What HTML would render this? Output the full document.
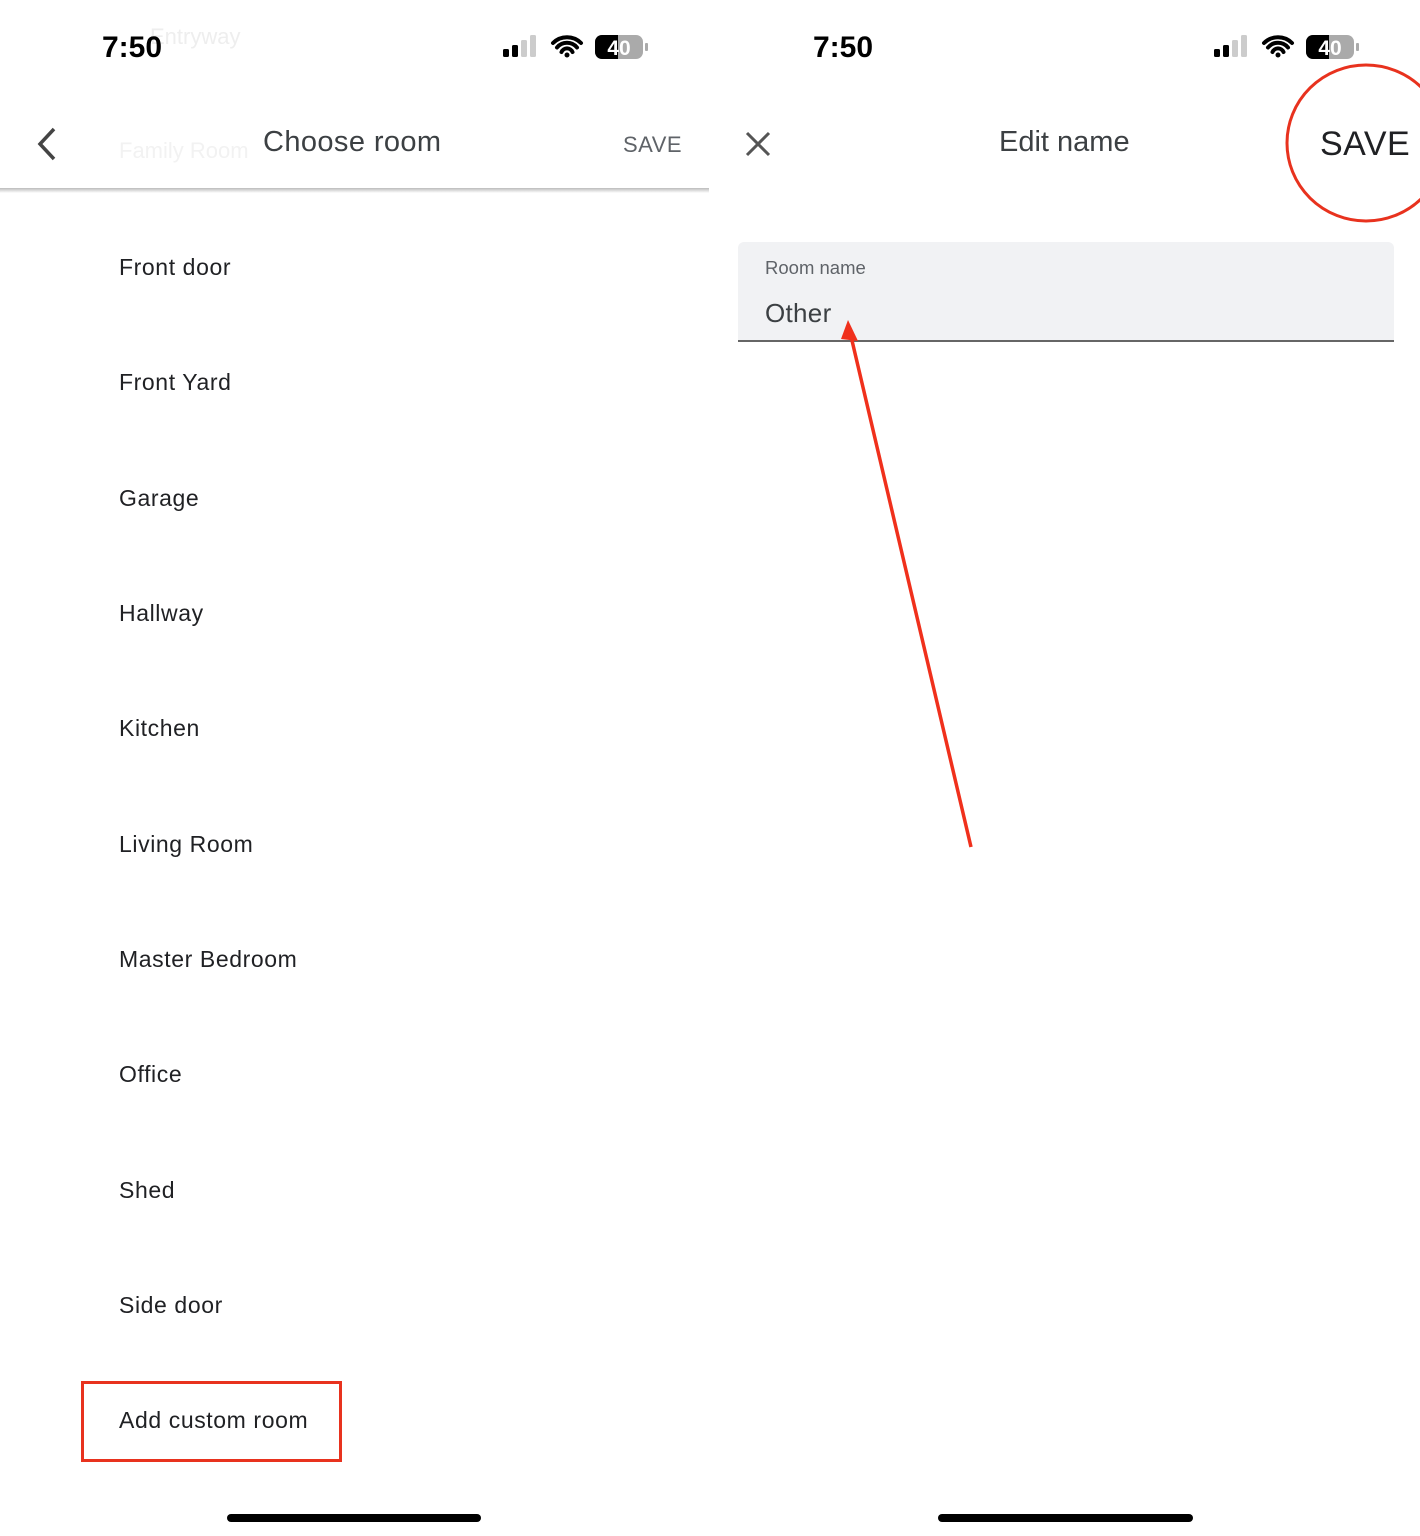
<!DOCTYPE html>
<html><head><meta charset="utf-8"><style>
*{margin:0;padding:0;box-sizing:border-box}
body{width:1420px;height:1536px;background:#fff;position:relative;overflow:hidden;font-family:"Liberation Sans",Arial,sans-serif}
.a{position:absolute;white-space:nowrap}
.time{font-size:30px;font-weight:bold;color:#000;top:31px}
.item{left:119px;font-size:23px;color:#202124;letter-spacing:.6px}
</style></head><body>
<div class="a" style="left:150px;top:24px;font-size:22px;color:#eee">Entryway</div>
<div class="a time" style="left:102px">7:50</div>
<svg class="a" style="left:500px;top:34px" width="150" height="28" viewBox="0 0 150 28">
<rect x="3" y="15" width="6" height="8" rx="1.5" fill="#000"/><rect x="12" y="11" width="6" height="12" rx="1.5" fill="#000"/><rect x="21" y="6" width="6" height="17" rx="1.5" fill="#ccc"/><rect x="30" y="1" width="6" height="22" rx="1.5" fill="#ccc"/>
<path d="M53 9a20 20 0 0 1 28 0M57 13.5a13 13 0 0 1 20 0M61.5 18a6 6 0 0 1 11 0" stroke="#000" stroke-width="4" fill="none" stroke-linecap="round"/><circle cx="67" cy="21" r="2.5" fill="#000"/>
<rect x="95" y="1" width="48" height="24" rx="7" fill="#aaa"/><path d="M102 1h16v24h-16a7 7 0 0 1-7-7v-10a7 7 0 0 1 7-7z" fill="#000"/><rect x="145" y="9" width="3" height="8" rx="1" fill="#aaa"/>
<text x="119" y="21" font-size="21" font-weight="bold" fill="#fff" text-anchor="middle" font-family="Liberation Sans">40</text></svg>
<div class="a time" style="left:813px">7:50</div>
<svg class="a" style="left:1211px;top:34px" width="150" height="28" viewBox="0 0 150 28">
<rect x="3" y="15" width="6" height="8" rx="1.5" fill="#000"/><rect x="12" y="11" width="6" height="12" rx="1.5" fill="#000"/><rect x="21" y="6" width="6" height="17" rx="1.5" fill="#ccc"/><rect x="30" y="1" width="6" height="22" rx="1.5" fill="#ccc"/>
<path d="M53 9a20 20 0 0 1 28 0M57 13.5a13 13 0 0 1 20 0M61.5 18a6 6 0 0 1 11 0" stroke="#000" stroke-width="4" fill="none" stroke-linecap="round"/><circle cx="67" cy="21" r="2.5" fill="#000"/>
<rect x="95" y="1" width="48" height="24" rx="7" fill="#aaa"/><path d="M102 1h16v24h-16a7 7 0 0 1-7-7v-10a7 7 0 0 1 7-7z" fill="#000"/><rect x="145" y="9" width="3" height="8" rx="1" fill="#aaa"/>
<text x="119" y="21" font-size="21" font-weight="bold" fill="#fff" text-anchor="middle" font-family="Liberation Sans">40</text></svg>
<div class="a" style="left:0;top:188px;width:709px;height:5px;background:linear-gradient(#bbb,#fff)"></div>
<svg class="a" style="left:34px;top:126px" width="26" height="36"><path d="M20 3L6 18l14 15" stroke="#444" stroke-width="3.5" fill="none"/></svg>
<div class="a" style="left:119px;top:138px;font-size:22px;color:#f2f2f2">Family Room</div>
<div class="a" style="left:263px;top:126px;font-size:29px;color:#3c4043;letter-spacing:.4px">Choose room</div>
<div class="a" style="left:623px;top:132px;font-size:22px;color:#5f6368;letter-spacing:.5px">SAVE</div>
<div class="a item" style="top:254px">Front door</div>
<div class="a item" style="top:369px">Front Yard</div>
<div class="a item" style="top:485px">Garage</div>
<div class="a item" style="top:600px">Hallway</div>
<div class="a item" style="top:715px">Kitchen</div>
<div class="a item" style="top:831px">Living Room</div>
<div class="a item" style="top:946px">Master Bedroom</div>
<div class="a item" style="top:1061px">Office</div>
<div class="a item" style="top:1177px">Shed</div>
<div class="a item" style="top:1292px">Side door</div>
<div class="a item" style="top:1407px">Add custom room</div>
<div class="a" style="left:81px;top:1381px;width:261px;height:81px;border:3px solid #e8321e"></div>
<div class="a" style="left:227px;top:1514px;width:254px;height:8px;border-radius:4px;background:#000"></div>
<svg class="a" style="left:744px;top:130px" width="28" height="28"><path d="M3 3l22 22M25 3L3 25" stroke="#555" stroke-width="3"/></svg>
<div class="a" style="left:999px;top:126px;font-size:29px;color:#3c4043">Edit name</div>
<div class="a" style="left:1320px;top:125px;font-size:34px;color:#202124;letter-spacing:.5px">SAVE</div>
<svg class="a" style="left:1280px;top:60px" width="140" height="170"><ellipse cx="86" cy="83" rx="79" ry="78" stroke="#e8321e" stroke-width="3" fill="none"/></svg>
<div class="a" style="left:738px;top:242px;width:656px;height:100px;background:#f1f2f4;border-radius:6px 6px 0 0;border-bottom:2px solid #666"></div>
<div class="a" style="left:765px;top:257px;font-size:18.5px;color:#5f6368">Room name</div>
<div class="a" style="left:765px;top:298px;font-size:26px;color:#3c4043;letter-spacing:.3px">Other</div>
<svg class="a" style="left:830px;top:310px" width="160" height="550"><path d="M141 537L20 22" stroke="#f0301c" stroke-width="3.5"/><path d="M18 10L28 31L11 29Z" fill="#f0301c"/></svg>
<div class="a" style="left:938px;top:1514px;width:255px;height:8px;border-radius:4px;background:#000"></div>
</body></html>
